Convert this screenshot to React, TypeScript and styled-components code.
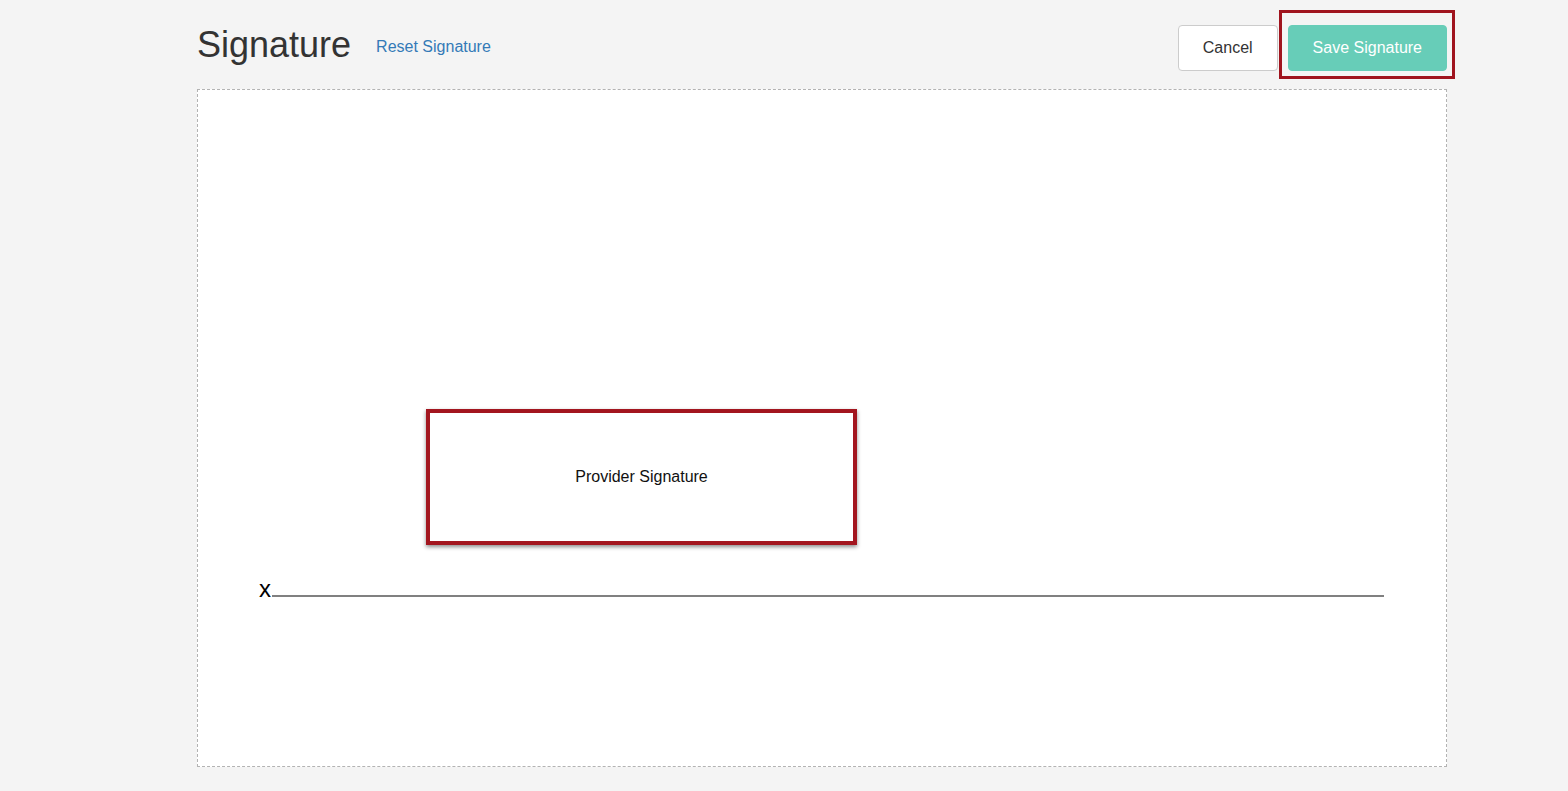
import React from "react";
import styled, { createGlobalStyle } from "styled-components";

const GlobalStyle = createGlobalStyle`
  html, body {
    margin: 0;
    padding: 0;
    background: #f4f4f4;
    font-family: "Liberation Sans", Arial, Helvetica, sans-serif;
  }
  * {
    box-sizing: border-box;
  }
`;

const Page = styled.div`
  width: 1250px;
  margin-left: 197px;
  padding-top: 25px;
  padding-bottom: 24px;
`;

const Header = styled.div`
  display: flex;
  justify-content: space-between;
  align-items: flex-start;
  height: 46px;
  margin-bottom: 18px;
`;

const TitleGroup = styled.div`
  display: flex;
  align-items: flex-start;
  gap: 25px;
`;

const Title = styled.h1`
  margin: 2px 0 0;
  font-size: 36px;
  line-height: 36px;
  font-weight: 400;
  color: #333;
`;

const ResetLink = styled.a`
  margin-top: 13px;
  font-size: 16px;
  line-height: 18px;
  color: #337ab7;
  text-decoration: none;
  cursor: pointer;
`;

const Actions = styled.div`
  display: flex;
  gap: 10px;
`;

const Button = styled.button<{ $primary?: boolean }>`
  font-family: inherit;
  font-size: 16px;
  line-height: 20px;
  padding: 12px 24px;
  border-radius: 4px;
  border: 1px solid ${(p) => (p.$primary ? "#67cdb8" : "#cccccc")};
  background: ${(p) => (p.$primary ? "#67cdb8" : "#ffffff")};
  color: ${(p) => (p.$primary ? "#ffffff" : "#333333")};
  cursor: pointer;
`;

const Highlighted = styled.div`
  position: relative;
  display: flex;
`;

const Callout = styled.span`
  position: absolute;
  top: -15px;
  left: -9px;
  right: -8px;
  bottom: -8px;
  border: 3px solid #a0141e;
  pointer-events: none;
`;

const Canvas = styled.div`
  position: relative;
  height: 678px;
  background: #ffffff;
  border: 1px dashed #b3b3b3;
  padding-top: 487px;
`;

const FieldBox = styled.div`
  position: absolute;
  left: 228px;
  top: 319px;
  width: 431px;
  height: 136px;
  display: flex;
  align-items: center;
  justify-content: center;
  border: 4px solid #a3161f;
  box-shadow: 0 2px 4px rgba(0, 0, 0, 0.45);
  background: #ffffff;
  font-size: 16px;
  color: #111;
`;

const SignLine = styled.div`
  display: flex;
  align-items: baseline;
  margin: 0 62px 0 61px;
`;

const Mark = styled.span`
  font-size: 24px;
  line-height: 24px;
  color: #000;
`;

const Rule = styled.div`
  flex: 1;
  height: 2px;
  margin-left: 1px;
  background: #808080;
`;

const App = () => {
  return (
    <>
      <GlobalStyle />
      <Page>
        <Header>
          <TitleGroup>
            <Title>Signature</Title>
            <ResetLink>Reset Signature</ResetLink>
          </TitleGroup>
          <Actions>
            <Button>Cancel</Button>
            <Highlighted>
              <Button $primary>Save Signature</Button>
              <Callout />
            </Highlighted>
          </Actions>
        </Header>
        <Canvas>
          <FieldBox>Provider Signature</FieldBox>
          <SignLine>
            <Mark>x</Mark>
            <Rule />
          </SignLine>
        </Canvas>
      </Page>
    </>
  );
};

export default App;
